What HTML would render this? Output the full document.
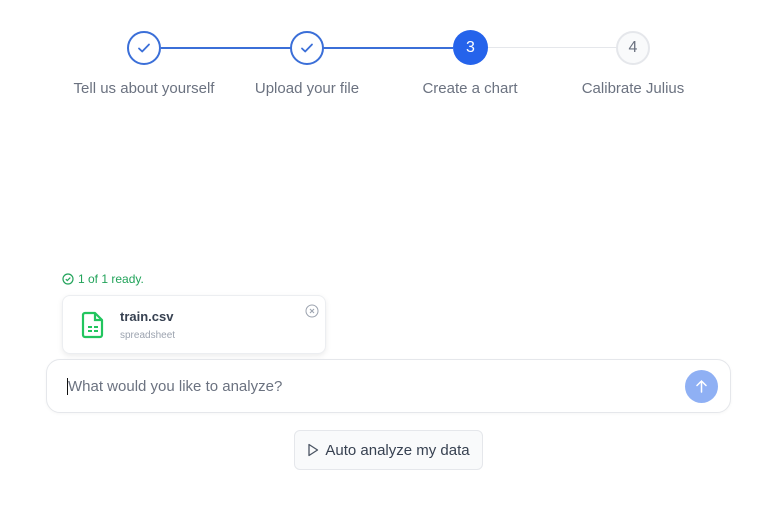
<!DOCTYPE html>
<html><head><style>
body{margin:0;width:768px;height:523px;background:#fff;font-family:"Liberation Sans",sans-serif;position:relative;overflow:hidden}
.a{position:absolute}
.c{position:absolute;width:34px;height:34px;border-radius:50%;box-sizing:border-box;display:flex;align-items:center;justify-content:center;font-size:16px;top:31px}
.l{position:absolute;top:80px;font-size:15px;color:#6b7280;transform:translateX(-50%);white-space:nowrap}
</style></head><body>
<div class="a" style="left:161px;top:47px;width:292px;height:2px;background:#3b6fd8"></div>
<div class="a" style="left:487px;top:47px;width:130px;height:1px;background:#e5e7eb"></div>
<div class="c" style="left:127px;border:2px solid #3b6fd8;background:#fff"><svg width="16" height="16" viewBox="0 0 16 16"><path d="M3 8.5l3.2 3L13 4.5" fill="none" stroke="#3b6fd8" stroke-width="1.8" stroke-linecap="round" stroke-linejoin="round"/></svg></div>
<div class="c" style="left:290px;border:2px solid #3b6fd8;background:#fff"><svg width="16" height="16" viewBox="0 0 16 16"><path d="M3 8.5l3.2 3L13 4.5" fill="none" stroke="#3b6fd8" stroke-width="1.8" stroke-linecap="round" stroke-linejoin="round"/></svg></div>
<div class="c" style="left:453px;background:#2563eb;color:#fff;width:35px;height:35px;top:30px">3</div>
<div class="c" style="left:616px;border:2px solid #e5e7eb;background:#f9fafb;color:#6b7280">4</div>
<div class="l" style="left:144px">Tell us about yourself</div>
<div class="l" style="left:307px">Upload your file</div>
<div class="l" style="left:470px">Create a chart</div>
<div class="l" style="left:633px">Calibrate Julius</div>

<div class="a" style="left:62px;top:272px;font-size:12px;color:#22a35a;display:flex;align-items:center;gap:4px"><svg width="12" height="12" viewBox="0 0 12 12"><circle cx="6" cy="6" r="5" fill="none" stroke="#22a35a" stroke-width="1.2"/><path d="M3.8 6.2l1.5 1.4 3-3" fill="none" stroke="#22a35a" stroke-width="1.2"/></svg>1 of 1 ready.</div>
<div class="a" style="left:62px;top:295px;width:264px;height:59px;box-sizing:border-box;border:1px solid #eceef1;border-radius:8px;box-shadow:0 2px 6px rgba(0,0,0,.08);background:#fff">
<svg class="a" style="left:18px;top:15px" width="24" height="28" viewBox="0 0 24 28"><path d="M4 2h10l7 7v15a2 2 0 0 1-2 2H4a2 2 0 0 1-2-2V4a2 2 0 0 1 2-2z" fill="none" stroke="#22c55e" stroke-width="2.2" stroke-linejoin="round"/><path d="M14 2v7h7" fill="none" stroke="#22c55e" stroke-width="2.2"/><rect x="7" y="15" width="4" height="2" fill="#22c55e"/><rect x="13" y="15" width="4" height="2" fill="#22c55e"/><rect x="7" y="19" width="4" height="2" fill="#22c55e"/><rect x="13" y="19" width="4" height="2" fill="#22c55e"/></svg>
<div class="a" style="left:57px;top:13px;font-size:13px;font-weight:bold;color:#374151">train.csv</div>
<div class="a" style="left:57px;top:34px;font-size:10px;color:#9ca3af">spreadsheet</div>
<svg class="a" style="left:242px;top:8px" width="14" height="14" viewBox="0 0 14 14"><circle cx="7" cy="7" r="6" fill="none" stroke="#9ca3af"/><path d="M5 5l4 4M9 5l-4 4" stroke="#9ca3af" stroke-width="1.1"/></svg>
</div>
<div class="a" style="left:46px;top:359px;width:685px;height:54px;box-sizing:border-box;border:1px solid #e5e7eb;border-radius:14px;background:#fff;box-shadow:0 1px 3px rgba(0,0,0,.04)">
<div class="a" style="left:20px;top:18px;font-size:15px;color:#6b7280;border-left:1px solid #111;padding-left:0">What would you like to analyze?</div>
<div class="a" style="left:638px;top:10px;width:33px;height:33px;border-radius:50%;background:#8fb0f4"><svg width="33" height="33" viewBox="0 0 33 33"><path d="M16.5 22V11M12 15.5l4.5-4.5 4.5 4.5" fill="none" stroke="#fff" stroke-width="1.5" stroke-linecap="round"/></svg></div>
</div>
<div class="a" style="left:294px;top:430px;width:189px;height:40px;box-sizing:border-box;border:1px solid #e5e7eb;border-radius:6px;background:#f9fafb;display:flex;align-items:center;justify-content:center;gap:6px;font-size:15px;color:#374151"><svg width="12" height="14" viewBox="0 0 12 14"><path d="M2 1.5l8.5 5.5L2 12.5z" fill="none" stroke="#4b5563" stroke-width="1.3" stroke-linejoin="round"/></svg>Auto analyze my data</div>
</body></html>
